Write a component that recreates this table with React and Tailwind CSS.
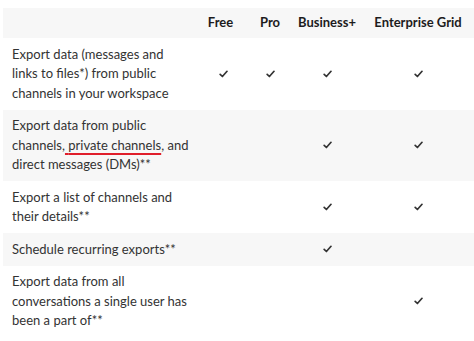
import React from "react";

const Check = () => (
  <svg width="9" height="8" viewBox="0 0 9 8" className="inline-block">
    <path d="M1.2 4.4 L3.4 6.5 L8 1.3" fill="none" stroke="#333" strokeWidth="1.7" strokeLinecap="round" strokeLinejoin="round" />
  </svg>
);

const rows = [
  {
    lines: ["Export data (messages and", "links to files*) from public", "channels in your workspace"],
    checks: [true, true, true, true],
    bg: false,
  },
  {
    special: true,
    checks: [false, false, true, true],
    bg: true,
  },
  {
    lines: ["Export a list of channels and", "their details**"],
    checks: [false, false, true, true],
    bg: false,
  },
  {
    lines: ["Schedule recurring exports**"],
    checks: [false, false, true, false],
    bg: true,
  },
  {
    lines: ["Export data from all", "conversations a single user has", "been a part of**"],
    checks: [false, false, false, true],
    bg: false,
  },
];

export default function App() {
  return (
    <div
      className="w-[474px] h-[341px] overflow-hidden bg-white pt-[8px] pl-[3px] text-[#333] text-[13px] leading-[19.5px]"
      style={{ fontFamily: 'Lato, sans-serif' }}
    >
      <div className="grid grid-cols-[195px_50px_44px_70px_1fr] bg-[#f7f7f7] h-[30px] items-center font-bold text-[#1d1c1d] whitespace-nowrap">
        <div />
        <div className="text-center pr-[5px]">Free</div>
        <div className="text-center">Pro</div>
        <div className="text-center">Business+</div>
        <div className="text-center">Enterprise Grid</div>
      </div>
      {rows.map((r, i) => (
        <div
          key={i}
          className={`grid grid-cols-[195px_50px_44px_70px_1fr] items-center py-[6.5px] ${r.bg ? "bg-[#f7f7f7]" : "bg-white"}`}
        >
          <div className="pl-[9px] whitespace-nowrap">
            {r.special ? (
              <>
                <div>Export data from public</div>
                <div>
                  channels,
                  <span className="underline decoration-[#e01e2b] decoration-[1.5px] underline-offset-[3px]">
                    {" "}private channels
                  </span>
                  , and
                </div>
                <div>direct messages (DMs)**</div>
              </>
            ) : (
              r.lines.map((l, j) => <div key={j}>{l}</div>)
            )}
          </div>
          {r.checks.map((c, j) => (
            <div key={j} className="flex justify-center">
              {c ? <Check /> : null}
            </div>
          ))}
        </div>
      ))}
    </div>
  );
}
